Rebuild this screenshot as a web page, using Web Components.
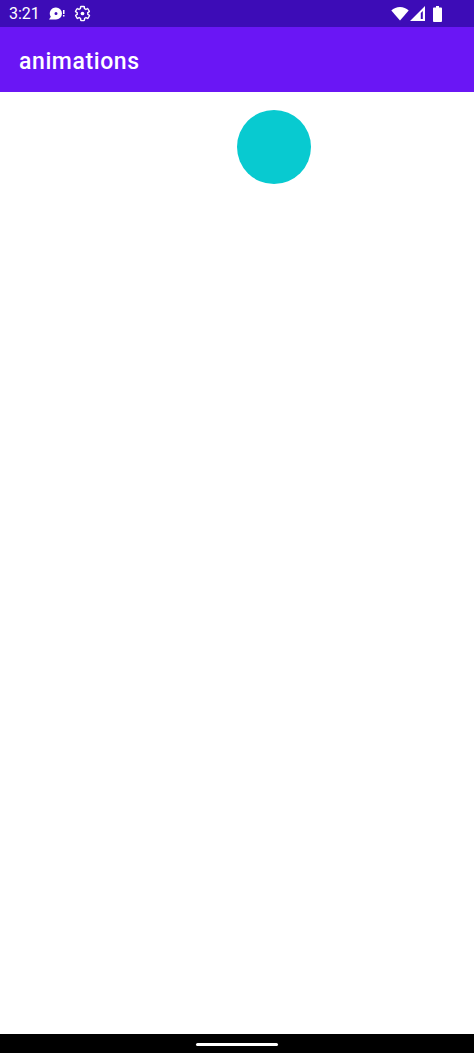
<!DOCTYPE html>
<html>
<head>
<meta charset="utf-8">
<style>
  html, body { margin: 0; height: 100%; }
  body { font-family: Roboto, "Liberation Sans", sans-serif; }
</style>
</head>
<body>
<phone-screen>
  <status-bar slot="status" time="3:21"></status-bar>
  <app-bar slot="bar">animations</app-bar>
  <circle-view></circle-view>
</phone-screen>
<script>
class PhoneScreen extends HTMLElement {
  constructor() {
    super();
    const shadow = this.attachShadow({ mode: "open" });
    shadow.innerHTML = `
      <style>
        :host { display: flex; flex-direction: column; height: 1053px; background: #fff; overflow: hidden; }
        main { flex: 1; display: flex; align-items: flex-start; padding: 18px 0 0 237px; }
        footer { height: 19px; background: #000; display: flex; justify-content: center; padding-top: 9px; box-sizing: border-box; }
        footer span { width: 82px; height: 3px; background: #fff; border-radius: 2px; }
      </style>
      <slot name="status"></slot>
      <slot name="bar"></slot>
      <main><slot></slot></main>
      <footer><span></span></footer>
    `;
  }
}

class StatusBar extends HTMLElement {
  constructor() {
    super();
    const shadow = this.attachShadow({ mode: "open" });
    const time = this.getAttribute("time");
    shadow.innerHTML = `
      <style>
        :host { display: flex; align-items: center; height: 27px; background: #3d0cb7; color: #fff; padding: 0 32px 0 9px; font-size: 16px; }
        .left, .right { display: flex; align-items: center; }
        .right { margin-left: auto; }
        svg { display: block; fill: #fff; }
      </style>
      <div class="left">
        <span>${time}</span>
        <svg style="margin-left:8px" width="17" height="16" viewBox="0 0 17 16">
          <path fill-rule="evenodd" d="M8 1.500a6 6 0 0 1 6 6 6 6 0 0 1-6 6H1l1.800-2.700A6 6 0 0 1 8 1.500zM8 6a1.500 1.500 0 1 0 0 3 1.500 1.500 0 0 0 0-3z"/>
          <rect x="15" y="4" width="1.500" height="4"/><rect x="15" y="9" width="1.500" height="1.500"/>
        </svg>
        <svg style="margin-left:9px" width="17" height="17" viewBox="0 0 24 24">
          <path d="M19.400 13c0-.3.100-.6.100-1s0-.7-.1-1l2.100-1.600c.2-.2.200-.4.100-.6l-2-3.500c-.1-.2-.4-.3-.6-.2l-2.500 1c-.5-.4-1.100-.7-1.700-1l-.4-2.700c0-.2-.2-.4-.5-.4h-4c-.2 0-.4.200-.5.400l-.4 2.700c-.6.300-1.200.600-1.700 1l-2.500-1c-.2-.1-.5 0-.6.200l-2 3.500c-.1.200-.1.500.1.600L4.600 11c0 .3-.1.600-.1 1s0 .7.100 1l-2.100 1.600c-.2.200-.2.400-.1.600l2 3.500c.1.200.4.300.6.200l2.500-1c.5.400 1.100.700 1.700 1l.4 2.700c0 .2.200.4.500.4h4c.2 0 .4-.2.500-.4l.4-2.700c.6-.3 1.200-.6 1.700-1l2.500 1c.2.100.5 0 .6-.2l2-3.500c.1-.2.100-.4-.1-.6L19.400 13z" fill="none" stroke="#fff" stroke-width="2"/>
          <circle cx="12" cy="12" r="2.600"/>
        </svg>
      </div>
      <div class="right">
        <svg width="18" height="15" viewBox="0 0 18 15"><path d="M9 14.500L0.300 4.400C2.700 2.300 5.700 1 9 1s6.300 1.300 8.700 3.400z"/></svg>
        <svg style="margin-left:1px" width="15" height="15" viewBox="0 0 15 15"><path fill-rule="evenodd" d="M15 0v15H0zM12.800 5L10.800 7V13H12.800z"/></svg>
        <svg style="margin-left:8px" width="9" height="16" viewBox="0 0 9 16"><path d="M3 0h3v1.500h2c.5 0 1 .5 1 1V15c0 .5-.5 1-1 1H1c-.5 0-1-.5-1-1V2.500c0-.5.500-1 1-1h2z"/></svg>
      </div>
    `;
  }
}

class AppBar extends HTMLElement {
  constructor() {
    super();
    const shadow = this.attachShadow({ mode: "open" });
    shadow.innerHTML = `
      <style>
        :host { display: flex; align-items: center; height: 65px; padding: 3px 0 0 19px; box-sizing: border-box; background: #6a16f5; color: #fff; font-size: 23px; font-weight: 500; letter-spacing: .6px; }
      </style>
      <slot></slot>
    `;
  }
}

class CircleView extends HTMLElement {
  constructor() {
    super();
    const shadow = this.attachShadow({ mode: "open" });
    shadow.innerHTML = `
      <style>
        :host { display: block; width: 74px; height: 74px; border-radius: 50%; background: #08cad0; }
      </style>
    `;
  }
}

customElements.define("phone-screen", PhoneScreen);
customElements.define("status-bar", StatusBar);
customElements.define("app-bar", AppBar);
customElements.define("circle-view", CircleView);
</script>
</body>
</html>
